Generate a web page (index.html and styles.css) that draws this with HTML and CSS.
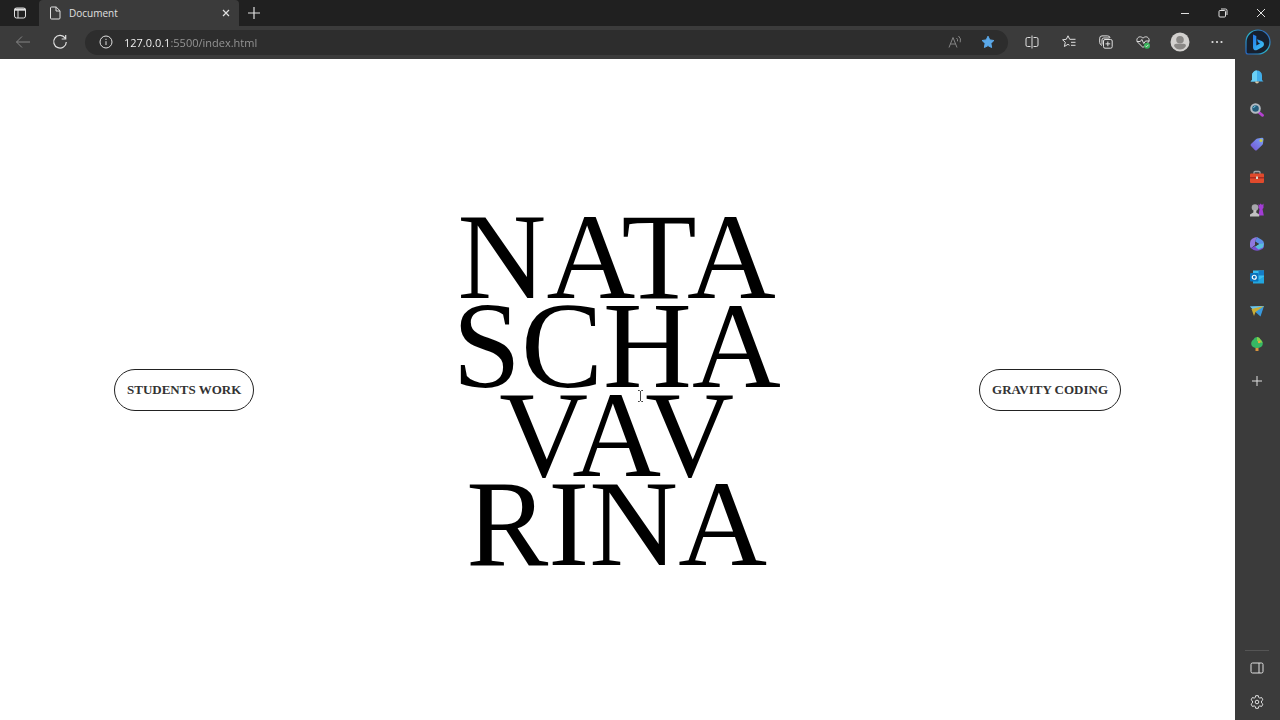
FILE: index.html
```html
<!DOCTYPE html>
<html lang="en">
<head>
<meta charset="utf-8">
<title>Document</title>
<link rel="stylesheet" href="styles.css">
</head>
<body>
<div class="browser">
  <header class="titlebar">
    <button class="tab-actions" aria-label="Tab actions"><svg class="icon" viewBox="0 0 14 14"><rect x="1.500" y="2" width="11" height="10" rx="2"/><path d="M1.500 3.600h11" stroke-width="2.200"/><path d="M5 4v8"/></svg></button>
    <div class="tab">
      <svg class="icon icon-page" viewBox="0 0 12 14"><path d="M2.500 1h4.700L11 4.800V12q0 1-1 1H2.500q-1 0-1-1V2q0-1 1-1zM7 1v4h4"/></svg>
      <span class="tab-title">Document</span>
      <button class="tab-close" aria-label="Close tab"><svg class="icon icon-small" viewBox="0 0 10 10"><path d="M2 2l6 6M8 2L2 8" stroke-width="1.200"/></svg></button>
    </div>
    <button class="new-tab" aria-label="New tab"><svg class="icon" viewBox="0 0 14 14"><path d="M7 1v12M1 7h12" stroke-width="1.200"/></svg></button>
    <div class="window-controls">
      <button class="window-button" aria-label="Minimize"><svg class="icon icon-small" viewBox="0 0 10 10"><path d="M1 5.500h8"/></svg></button>
      <button class="window-button" aria-label="Restore"><svg class="icon icon-small" viewBox="0 0 10 10"><rect x="1" y="2.500" width="6.500" height="6.500" rx="1"/><path d="M3 1h4.500Q9 1 9 2.500V7"/></svg></button>
      <button class="window-button" aria-label="Close"><svg class="icon icon-small" viewBox="0 0 10 10"><path d="M1 1l8 8M9 1L1 9"/></svg></button>
    </div>
  </header>

  <div class="toolbar">
    <button class="tool dim" aria-label="Back"><svg class="icon icon-large" viewBox="0 0 16 16"><path d="M15 8H1.500M7 2.500L1.500 8 7 13.500"/></svg></button>
    <button class="tool" aria-label="Refresh"><svg class="icon icon-large" viewBox="0 0 16 16"><path d="M13.200 4.200A6.300 6.300 0 1 0 14.300 8M13.700 1v4h-4" stroke-width="1.200"/></svg></button>
    <div class="address">
      <button class="address-button" aria-label="Site information"><svg class="icon" viewBox="0 0 14 14"><circle cx="7" cy="7" r="6"/><path d="M7 6.200V10M7 3.800v1.200"/></svg></button>
      <input class="url" aria-label="Address" value="127.0.0.1:5500/index.html">
      <button class="address-button dim" aria-label="Read aloud"><svg class="icon" viewBox="0 0 14 14"><path d="M1 12.500L5 2.500l4 10M2.400 9h5.200M8.500 3q1.500 1.300 1 3.300M10.500 1q3 2.500 1.700 6.300"/></svg></button>
      <button class="address-button" aria-label="Favorite"><svg class="icon" viewBox="0 0 14 14"><path fill="#5ba9ea" stroke="#5ba9ea" stroke-linejoin="round" d="M7 1.200l1.800 3.700 4.100.600-3 2.900.7 4.100L7 10.600l-3.600 1.900.7-4.100-3-2.900 4.100-.6z"/></svg></button>
    </div>
    <button class="tool" aria-label="Split screen"><svg class="icon" viewBox="0 0 14 14"><path d="M5.500 2.500h-3q-1.500 0-1.500 1.500v6q0 1.500 1.500 1.500h3M8.500 2.500h3Q13 2.500 13 4v6q0 1.500-1.500 1.500h-3M7 .5v13"/></svg></button>
    <button class="tool" aria-label="Favorites"><svg class="icon" viewBox="0 0 14 14"><path stroke-linejoin="round" d="M7.500 10.300L6 9.300l-3.600 2.200.9-4.200L.6 4.800l3.700-.5L6 .8l1.700 3.500h5.800M9 7.300h4.500M9 10.300h4.500"/></svg></button>
    <button class="tool" aria-label="Collections"><svg class="icon" viewBox="0 0 14 14"><path d="M3 10.500Q.7 9.500.7 7.500V3.200q0-2.300 2.300-2.300h5.500q2.500 0 2.500 2.100"/><rect x="4.500" y="4.500" width="8.700" height="8.700" rx="1.500"/><path d="M3 9.500V4.800Q3 3 4.800 3h5.700M8.850 6.500v4.700M6.500 8.850h4.700"/></svg></button>
    <button class="tool" aria-label="Browser essentials"><svg class="icon" viewBox="0 0 14 14"><path d="M7 12.500L1.700 7.200C-1 4 3.500-.5 7 3.200c3.500-3.700 8 .8 5.300 4L7 12.500M.8 6.500h3.500l1.500-2 2 4L9.500 6h4"/><circle cx="11" cy="10.800" r="3" fill="#39b45b" stroke="none"/><path d="M9.500 10.800l1 1 1.900-2"/></svg></button>
    <button class="tool" aria-label="Profile"><svg class="icon icon-profile" viewBox="0 0 20 20"><circle cx="10" cy="10" r="9.500" fill="#d2d0ce" stroke="none"/><circle cx="10" cy="7.800" r="3.800" fill="#8a8886" stroke="none"/><path d="M4 14q0-2.200 2.200-2.200h7.600Q16 11.800 16 14q-2.200 3.500-6 3.500T4 14z" fill="#8a8886" stroke="none"/></svg></button>
    <button class="tool" aria-label="Settings and more"><svg class="icon" viewBox="0 0 14 14"><g fill="#e0e0e0" stroke="none"><circle cx="2.500" cy="7" r="1.100"/><circle cx="7" cy="7" r="1.100"/><circle cx="11.500" cy="7" r="1.100"/></g></svg></button>
    <button class="tool bing" aria-label="Bing chat"><svg class="icon icon-bing" viewBox="0 0 26 26">
      <defs>
        <linearGradient id="ring" x1="0" y1="1" x2="1" y2="0"><stop offset="0" stop-color="#2566c8"/><stop offset=".5" stop-color="#2bb6c9"/><stop offset="1" stop-color="#3154bd"/></linearGradient>
        <linearGradient id="bee" x1="0" y1="0" x2="1" y2="1"><stop offset="0" stop-color="#2175e8"/><stop offset="1" stop-color="#40c9f5"/></linearGradient>
      </defs>
      <path d="M13 1a12 12 0 1 1 0 24H3q-2 0-2-2V13A12 12 0 0 1 13 1z" fill="#17202e" stroke="url(#ring)" stroke-width="1.200"/>
      <path d="M8 5.500l3.300 1.500v9.500l3.700-2-2-1.200-1-3 4.800 1.700q2.200.8 2.200 3t-2 3.300l-5 2.700q-1.700.7-3-.2-1-.8-1-2.500z" fill="url(#bee)" stroke="none"/></svg></button>
  </div>

  <div class="workspace">
    <main class="page">
      <button class="pill">STUDENTS WORK</button>
      <h1 class="name">NATA<br>SCHA<br>VAV<br>RINA</h1>
      <button class="pill">GRAVITY CODING</button>
      <svg class="text-cursor" viewBox="0 0 7 12"><path d="M1 .5h1.500l1 1 1-1H6M3.500 1v10M1 11.500h1.500l1-1 1 1H6"/></svg>
    </main>

    <aside class="sidebar">
      <div class="apps">
        <button class="app" aria-label="Notifications"><svg class="icon art" viewBox="0 0 14 14"><path d="M2 10V5.500a5 5 0 0 1 10 0V10l1.500 1.500H.5z" fill="#41aeea"/><path d="M2 10V5.500A5 5 0 0 1 7 .5v11H.5z" fill="#6bd0f5"/><path d="M5 11.500h4q-.3 2-2 2t-2-2z" fill="#d8c9a8"/></svg></button>
        <button class="app" aria-label="Search"><svg class="icon art" viewBox="0 0 14 14"><path d="M8.500 9l4 3.300" stroke="#b341ce" stroke-width="2.800" stroke-linecap="round"/><circle cx="5.500" cy="5.500" r="4.300" fill="#245d7c" stroke="#b3bac2" stroke-width="2"/><path d="M3.500 5q.3-1.500 2-1.800" stroke="#75d1ed" fill="none"/></svg></button>
        <button class="app" aria-label="Shopping"><svg class="icon art" viewBox="0 0 14 14"><defs><linearGradient id="tag" x1="1" y1="0" x2="0" y2="1"><stop offset="0" stop-color="#78a4f8"/><stop offset="1" stop-color="#7752d2"/></linearGradient></defs><path d="M7.500 1.500L12 .7q1.300 0 1.500 1.300L13 6.500q-.2 1-1 1.800L7 13q-1 1-2.200 0L1 9q-1-1 0-2l5-4.700q.7-.7 1.500-.8z" fill="url(#tag)"/><circle cx="11" cy="3.500" r="1.500" fill="#c8cf45"/></svg></button>
        <button class="app" aria-label="Tools"><svg class="icon art" viewBox="0 0 14 14"><path d="M4 4V2.500Q4 1.500 5 1.500h4q1 0 1 1V4" fill="none" stroke="#9ea4a8" stroke-width="1.300"/><rect y="3.500" width="14" height="9.500" rx="1" fill="#e04a2c"/><path d="M0 7h14v1.500H0z" fill="#a82d22"/><path d="M6 6.500h2v2.500H6z" fill="#dddacd"/></svg></button>
        <button class="app" aria-label="Games"><svg class="icon art" viewBox="0 0 14 14"><path d="M8.500 1l1 1 1.200-1.500L12 2l1.500-1.500v4.500l-1 1 1.300 6.500H8.500l1-6.500-1-1z" fill="#a23cd4"/><circle cx="5" cy="4.500" r="3.300" fill="#a6a6aa"/><path d="M3.500 7h3l-.3 2.500 3 2v2H0v-2l3.300-2z" fill="#c2c1c2"/></svg></button>
        <button class="app" aria-label="Microsoft 365"><svg class="icon art" viewBox="0 0 14 14"><path d="M7 0l5 3q2 1.200 2 3.500V9.500L9 7 5 4.500z" fill="#5b8fe6"/><path d="M7 0Q5 0 2.200 1.800 0 3.300 0 6v3q0 1.300 1 2.200L5 8V4.500z" fill="#8f78dd"/><path d="M1 11.200L5 9l4 1 5-3.200v3q-.4 1.400-1.700 2.200-4.300 3-8.600 1z" fill="#7750ce"/><path d="M5 9.500L9 7l5-.5-1 4-4.500 2z" fill="#58bedc"/><path d="M5 4.500L9 7 5 9.500z" fill="#3b3b3b"/></svg></button>
        <button class="app" aria-label="Outlook"><svg class="icon art" viewBox="0 0 14 14"><rect x="3" y=".5" width="11" height="10" fill="#38bdf0"/><path d="M8.500.5H14v5H8.500z" fill="#167cc5"/><path d="M3 7l5.500 3L14 6.500v7H3z" fill="#22a6df"/><rect y="3" width="8.500" height="8.500" rx="1" fill="#0a72ba"/><circle cx="4.250" cy="7.250" r="2" fill="none" stroke="#fff" stroke-width="1.200"/></svg></button>
        <button class="app" aria-label="Drop"><svg class="icon art" viewBox="0 0 14 14"><path d="M0 2.500l14-.5-3.500 10.500L6 8.500z" fill="#3899de"/><path d="M0 2.500l14-.5-9 5.500z" fill="#6dc5e8"/><path d="M1.500 5L14 2 5.500 8 4 12z" fill="#c9ad35"/></svg></button>
        <button class="app" aria-label="E-tree"><svg class="icon art" viewBox="0 0 14 14"><path d="M5.500 9h3v5h-3z" fill="#d9943e"/><path d="M7 0q2.700 0 3.500 2.500 2.800 2 2.200 5Q12 10.900 7 10.900T1.300 7.500q-.6-3 2.200-5Q4.300 0 7 0z" fill="#36b764"/><path d="M7 0q2.500 0 3.500 2.500 1.700 1.600 1.900 3.500L7 4z" fill="#87ce4b"/><circle cx="9.200" cy="5" r="1.300" fill="#e7aa42"/></svg></button>
      </div>
      <button class="app add" aria-label="Add app"><svg class="icon icon-small" viewBox="0 0 10 10"><path d="M5 0v10M0 5h10"/></svg></button>
      <div class="sidebar-footer">
        <button class="app" aria-label="Hide sidebar"><svg class="icon" viewBox="0 0 14 14"><rect x="1" y="2" width="12" height="10" rx="1.500"/><path d="M9 2v10"/></svg></button>
        <button class="app" aria-label="Settings"><svg class="icon" viewBox="0 0 14 14"><path stroke-linejoin="round" d="M5.700.7h2.600l.4 1.800 1.100.6 1.800-.6 1.300 2.300L11.500 6v1.900l1.400 1.300-1.300 2.300-1.800-.6-1.100.6-.4 1.800H5.700l-.4-1.800-1.100-.6-1.800.6-1.300-2.300 1.400-1.300V6L1.100 4.800l1.300-2.300 1.800.6 1.100-.6z"/><circle cx="7" cy="7" r="1.800"/></svg></button>
      </div>
    </aside>
  </div>
</div>
</body>
</html>
```
FILE: styles.css
```css
* {
  box-sizing: border-box;
}

body {
  margin: 0;
  background: #fff;
}

button,
input {
  margin: 0;
  padding: 0;
  border: 0;
  background: none;
  color: inherit;
  font: inherit;
}

button {
  display: flex;
  align-items: center;
  justify-content: center;
}

.browser {
  display: flex;
  flex-direction: column;
  min-height: 100vh;
  font-family: "Open Sans", "Noto Sans", sans-serif;
  font-size: 11px;
  color: #e0e0e0;
}

.icon {
  display: block;
  width: 14px;
  height: 14px;
  fill: none;
  stroke: #e0e0e0;
  stroke-width: 1;
}

.icon-small {
  width: 10px;
  height: 10px;
}

.icon-large {
  width: 16px;
  height: 16px;
}

.icon-page {
  width: 12px;
}

.icon-profile {
  width: 20px;
  height: 20px;
}

.icon-bing {
  width: 26px;
  height: 26px;
}

.art {
  stroke: none;
}

.dim .icon {
  stroke: #858585;
}

.titlebar {
  display: flex;
  height: 26px;
  background: #202020;
}

.tab-actions {
  width: 39px;
}

.tab {
  display: flex;
  align-items: center;
  gap: 8px;
  width: 200px;
  padding: 0 8px 0 10px;
  border-radius: 4px 4px 0 0;
  background: #3b3b3b;
}

.tab-title {
  flex: 1;
  font-size: 10px;
}

.new-tab {
  width: 30px;
}

.window-controls {
  display: flex;
  margin-left: auto;
}

.window-button {
  width: 38px;
}

.toolbar {
  display: flex;
  align-items: center;
  height: 33px;
  padding: 0 0 1px 4px;
  background: #3b3b3b;
}

.tool {
  width: 37px;
  height: 32px;
}

.bing {
  width: 45px;
}

.address {
  display: flex;
  flex: 1;
  align-items: center;
  height: 25px;
  margin: 0 5px 0 7px;
  padding: 0 4px;
  border-radius: 13px;
  background: #2d2d2d;
}

.address-button {
  width: 33px;
  height: 25px;
}

.url {
  flex: 1;
  min-width: 0;
  height: 25px;
  margin-left: 2px;
  background: linear-gradient(to right, #fff 46px, #999 46px);
  background-clip: text;
  color: transparent;
}

.workspace {
  display: flex;
  flex: 1;
}

.page {
  position: relative;
  display: flex;
  flex: 1;
  align-items: center;
  justify-content: space-between;
  padding: 0 114px;
  background: #fff;
  font-family: "Liberation Serif", "Times New Roman", serif;
}

.pill {
  height: 42px;
  padding: 0 12px;
  border: 1px solid #222;
  border-radius: 21px;
  color: #333;
  font-size: 13px;
  font-weight: bold;
}

.name {
  margin: 0;
  color: #000;
  font-size: 123px;
  font-weight: normal;
  line-height: 89px;
  text-align: center;
}

.text-cursor {
  position: absolute;
  top: 50%;
  left: calc(50% + 19px);
  width: 7px;
  height: 12px;
  fill: none;
  stroke: #444;
}

.sidebar {
  display: flex;
  flex-direction: column;
  align-items: center;
  width: 45px;
  padding: 1px 1px 1px 0;
  background: #3b3b3b;
}

.apps {
  display: grid;
  grid-auto-rows: 1fr;
  height: 301px;
}

.app {
  width: 24px;
}

.add {
  height: 40px;
}

.sidebar-footer {
  display: grid;
  grid-auto-rows: 34px;
  width: 24px;
  margin-top: auto;
  border-top: 1px solid #555;
}
```
